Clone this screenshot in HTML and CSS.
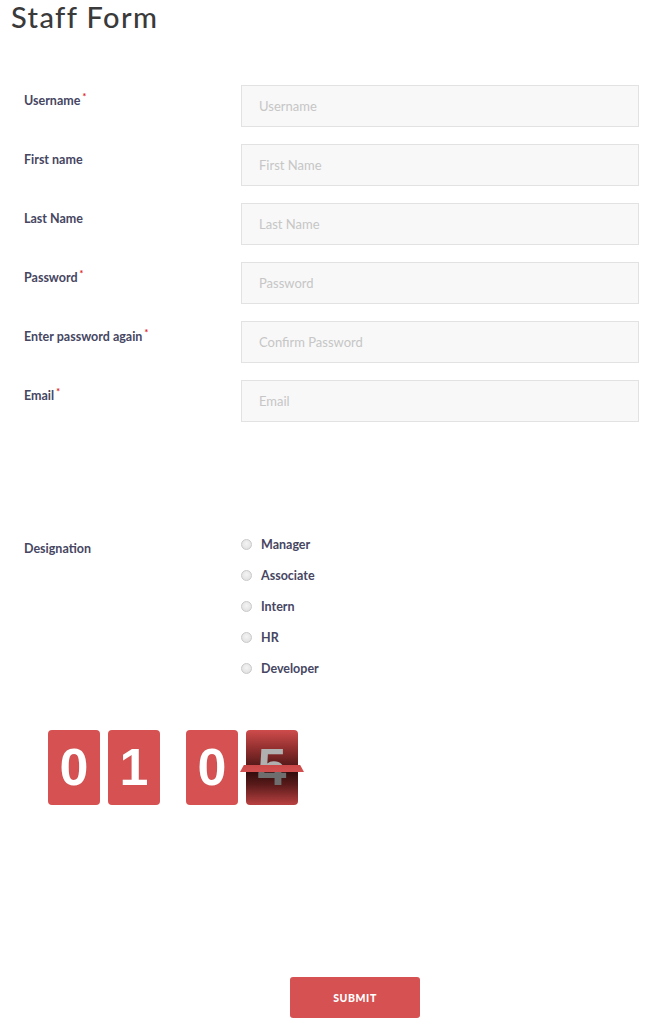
FILE: index.html
```html
<!DOCTYPE html>
<html>
<head>
<meta charset="utf-8">
<link rel="stylesheet" href="styles.css">
</head>
<body>
<h1 class="title">Staff Form</h1>
<form class="form">
  <div class="row">
    <label class="label">Username<span class="req">*</span></label>
    <input class="field" type="text" placeholder="Username">
  </div>
  <div class="row">
    <label class="label">First name</label>
    <input class="field" type="text" placeholder="First Name">
  </div>
  <div class="row">
    <label class="label">Last Name</label>
    <input class="field" type="text" placeholder="Last Name">
  </div>
  <div class="row">
    <label class="label">Password<span class="req">*</span></label>
    <input class="field" type="password" placeholder="Password">
  </div>
  <div class="row">
    <label class="label">Enter password again<span class="req">*</span></label>
    <input class="field" type="password" placeholder="Confirm Password">
  </div>
  <div class="row">
    <label class="label">Email<span class="req">*</span></label>
    <input class="field" type="email" placeholder="Email">
  </div>

  <div class="row radio-row">
    <label class="label label-des">Designation</label>
    <div class="radios">
      <label class="opt"><span class="dot"></span>Manager</label>
      <label class="opt"><span class="dot"></span>Associate</label>
      <label class="opt"><span class="dot"></span>Intern</label>
      <label class="opt"><span class="dot"></span>HR</label>
      <label class="opt"><span class="dot"></span>Developer</label>
    </div>
  </div>

  <div class="clock">
    <div class="card">0</div>
    <div class="card">1</div>
    <div class="card card-gap">0</div>
    <div class="card flip">
      <div class="half top"><span class="dg">5</span></div>
      <div class="half bottom"><span class="dg">4</span></div>
      <div class="flap"></div>
    </div>
  </div>

  <div class="actions">
    <button type="button" class="submit">SUBMIT</button>
  </div>
</form>
</body>
</html>
```

FILE: styles.css
```css
* { box-sizing: border-box; }

body {
  margin: 0;
  width: 646px;
  background: #fff;
  font-family: "Lato", "Liberation Sans", sans-serif;
}

.title {
  margin: 0;
  padding-left: 11px;
  font-family: "Lato", sans-serif;
  font-weight: 500;
  font-size: 29px;
  line-height: 34px;
  color: #3a3a3a;
  letter-spacing: 1.4px;
}

.form {
  margin-top: 51px;
  padding: 0 7px 0 24px;
  display: flex;
  flex-direction: column;
}

.row {
  display: grid;
  grid-template-columns: 217px 1fr;
  margin-bottom: 17px;
}

.label {
  font-family: "Lato", sans-serif;
  font-weight: 700;
  font-size: 12.5px;
  line-height: 18px;
  padding-top: 7px;
  color: #464662;
}

.req {
  color: #e02020;
  font-size: 9px;
  vertical-align: top;
  position: relative;
  top: -4px;
  margin-left: 2px;
}

.field {
  height: 42px;
  width: 100%;
  border: 1px solid #e2e2e2;
  background: #f8f8f8;
  padding: 0 0 0 17px;
  font-family: "Lato", sans-serif;
  font-size: 13px;
  color: #555;
  outline: none;
}

.field::placeholder { color: #c6c6c6; }

.radio-row {
  margin-top: 90px;
  margin-bottom: 0;
}

.label-des { padding-top: 11px; }

.radios {
  display: flex;
  flex-direction: column;
}

.opt {
  height: 31px;
  display: flex;
  align-items: center;
  font-family: "Lato", sans-serif;
  font-weight: 700;
  font-size: 12.5px;
  color: #464662;
}

.dot {
  width: 11px;
  height: 11px;
  border-radius: 50%;
  border: 1px solid #c9c9c9;
  background: radial-gradient(circle at 50% 40%, #f4f4f4, #dcdcdc);
  margin: 0 9px 0 0;
}

.clock {
  margin-top: 46px;
  margin-left: 24px;
  display: flex;
  gap: 8px;
  height: 75px;
}

.card {
  width: 52px;
  height: 75px;
  border-radius: 4px;
  background: #d65151;
  color: #fff;
  font-family: "Liberation Sans", Arial, sans-serif;
  font-weight: 700;
  font-size: 52px;
  line-height: 75px;
  text-align: center;
  text-shadow: 0 0 1px rgba(0,0,0,0.1);
}

.card-gap { margin-left: 18px; }

.flip {
  position: relative;
  background: transparent;
}

.half {
  position: absolute;
  left: 0;
  width: 100%;
  height: 50%;
  overflow: hidden;
}

.half .dg {
  position: absolute;
  left: 0;
  width: 100%;
  height: 75px;
  line-height: 75px;
  text-shadow: none;
}

.top {
  top: 0;
  border-radius: 4px 4px 0 0;
  background: linear-gradient(#cf4b4b, #8a2c2c 55%, #4e1616);
}

.top .dg {
  top: 0;
  color: #b0b0b0;
}

.bottom {
  bottom: 0;
  border-radius: 0 0 4px 4px;
  background: linear-gradient(#240808, #5a1a1a 45%, #b94141);
}

.bottom .dg {
  bottom: 0;
  color: #6e6e6e;
}

.flap {
  position: absolute;
  left: -6px;
  right: -6px;
  top: 35px;
  height: 7px;
  background: linear-gradient(#c94848, #d45050);
  clip-path: polygon(6% 0, 94% 0, 100% 100%, 0 100%);
}

.actions {
  margin-top: 172px;
  padding-left: 266px;
}

.submit {
  width: 130px;
  height: 41px;
  border: none;
  border-radius: 3px;
  background: #d65151;
  color: #fff;
  font-family: "Lato", sans-serif;
  font-weight: 900;
  font-size: 10.5px;
  letter-spacing: 0.6px;
  cursor: pointer;
}
```
